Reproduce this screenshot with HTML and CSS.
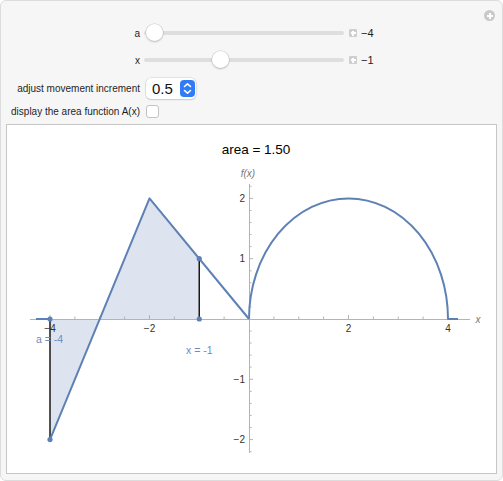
FILE: index.html
```html
<!DOCTYPE html>
<html>
<head>
<meta charset="utf-8">
<link rel="stylesheet" href="styles.css">
</head>
<body>
<div class="panel">
  <span class="corner-plus"></span>
  <div class="controls">
    <div class="row row-slider">
      <span class="label">a</span>
      <div class="slider"><span class="thumb thumb-a"></span></div>
      <span class="mini-plus"></span>
      <span class="value">−4</span>
    </div>
    <div class="row row-slider row-x">
      <span class="label">x</span>
      <div class="slider"><span class="thumb thumb-x"></span></div>
      <span class="mini-plus"></span>
      <span class="value">−1</span>
    </div>
    <div class="row row-popup">
      <span class="label">adjust movement increment</span>
      <div class="popup">
        <span class="popup-text">0.5</span>
        <span class="stepper">
          <svg width="15" height="17" viewBox="0 0 15 17"><path d="M4.5 6.5 L7.5 3.8 L10.5 6.5 M4.5 10.5 L7.5 13.2 L10.5 10.5" fill="none" stroke="#fff" stroke-width="1.6" stroke-linecap="round" stroke-linejoin="round"/></svg>
        </span>
      </div>
    </div>
    <div class="row row-check">
      <span class="label">display the area function A(x)</span>
      <span class="checkbox"></span>
    </div>
  </div>
  <div class="plot">
    <svg class="graph" width="489" height="348" viewBox="7 124 489 348">
      <text class="title" x="256" y="153" text-anchor="middle">area = 1.50</text>
      <polygon points="50,318 50,438.6 149.5,197.4 199.25,257.7 199.25,318" fill="#dee4ef"/>
      <g stroke="#b4b4b4" stroke-width="1" fill="none">
        <path d="M30 318.5 H470 M249.5 183 V452"/>
        <path d="M50 318 v-4 M149.5 318 v-4 M348.5 318 v-4 M448 318 v-4"/>
        <path d="M74.9 318 v-2.5 M99.75 318 v-2.5 M124.6 318 v-2.5 M174.4 318 v-2.5 M199.25 318 v-2.5 M224.1 318 v-2.5 M273.9 318 v-2.5 M298.75 318 v-2.5 M323.6 318 v-2.5 M373.4 318 v-2.5 M398.25 318 v-2.5 M423.1 318 v-2.5"/>
        <path d="M249 197.4 h4 M249 257.7 h4 M249 378.3 h4 M249 438.6 h4"/>
        <path d="M249 185.3 h2.5 M249 209.5 h2.5 M249 221.5 h2.5 M249 233.6 h2.5 M249 245.6 h2.5 M249 269.8 h2.5 M249 281.8 h2.5 M249 293.9 h2.5 M249 305.9 h2.5 M249 330.1 h2.5 M249 342.1 h2.5 M249 354.2 h2.5 M249 366.2 h2.5 M249 390.4 h2.5 M249 402.4 h2.5 M249 414.5 h2.5 M249 426.5 h2.5 M249 450.7 h2.5"/>
      </g>
      <g class="ticklabel">
        <text x="50" y="331" text-anchor="middle">−4</text>
        <text x="149.5" y="331" text-anchor="middle">−2</text>
        <text x="348.5" y="331" text-anchor="middle">2</text>
        <text x="448" y="331" text-anchor="middle">4</text>
        <text x="245" y="201" text-anchor="end">2</text>
        <text x="245" y="261" text-anchor="end">1</text>
        <text x="245" y="382" text-anchor="end">−1</text>
        <text x="245" y="442" text-anchor="end">−2</text>
      </g>
      <text class="axislabel" x="248" y="176" text-anchor="middle">f(x)</text>
      <text class="axislabel" x="478" y="322" text-anchor="middle">x</text>
      <g stroke="#1a1a1a" stroke-width="1.5">
        <path d="M50 318 V438.6 M199.25 318 V257.7"/>
      </g>
      <g stroke="#5e81b5" stroke-width="2" fill="none" stroke-linejoin="round">
        <path d="M36 318 H50 M50 438.6 L149.5 197.4 L249 318"/>
        <path d="M249 318 A99.5 120.6 0 0 1 448 318 H458"/>
      </g>
      <g fill="#5e81b5">
        <circle cx="50" cy="318" r="2.6"/>
        <circle cx="50" cy="438.6" r="2.6"/>
        <circle cx="199.25" cy="257.7" r="2.6"/>
        <circle cx="199.25" cy="318" r="2.6"/>
      </g>
      <text class="ptlabel" x="36" y="342">a = -4</text>
      <text class="ptlabel" x="186" y="353">x = -1</text>
    </svg>
  </div>
</div>
</body>
</html>
```

FILE: styles.css
```css
html, body {
  margin: 0;
  padding: 0;
  background: #ffffff;
}
body {
  font-family: "Liberation Sans", Arial, sans-serif;
  color: #222;
}
.panel {
  position: relative;
  width: 503px;
  height: 481px;
  box-sizing: border-box;
  background: #f6f6f6;
  border: 1px solid #dcdcdc;
  border-radius: 6px;
  padding: 0 5px 0 5px;
}
.corner-plus {
  position: absolute;
  right: 7px;
  top: 9px;
  width: 11px;
  height: 11px;
  border-radius: 50%;
  background: #c9c9c9;
}
.corner-plus::before, .corner-plus::after {
  content: "";
  position: absolute;
  background: #fff;
}
.corner-plus::before { left: 2.5px; top: 4.5px; width: 6px; height: 2px; }
.corner-plus::after { left: 4.5px; top: 2.5px; width: 2px; height: 6px; }
.controls {
  display: flex;
  flex-direction: column;
  padding-top: 22px;
}
.row {
  display: flex;
  align-items: center;
}
.label {
  width: 134px;
  display: flex;
  justify-content: flex-end;
  white-space: nowrap;
  font-size: 10px;
  color: #1e1e1e;
  flex: none;
}
.row-slider {
  height: 20px;
}
.row-x {
  margin-top: 7px;
}
.slider {
  position: relative;
  margin-left: 4px;
  width: 200px;
  height: 4px;
  border-radius: 2px;
  background: #dedede;
}
.thumb {
  position: absolute;
  top: -7px;
  width: 17px;
  height: 17px;
  border-radius: 50%;
  background: #fff;
  box-shadow: 0 0 0 0.5px #c4c4c4, 0 1px 2px rgba(0,0,0,0.25);
}
.thumb-a { left: 2px; }
.thumb-x { left: 68px; }
.mini-plus {
  position: relative;
  margin-left: 5px;
  width: 8px;
  height: 8px;
  border-radius: 1px;
  background: #cfcfcf;
}
.mini-plus::before, .mini-plus::after {
  content: "";
  position: absolute;
  background: #fff;
}
.mini-plus::before { left: 1.5px; top: 3px; width: 5px; height: 2px; }
.mini-plus::after { left: 3px; top: 1.5px; width: 2px; height: 5px; }
.value {
  margin-left: 4px;
  font-size: 11px;
  color: #222;
}
.row-popup {
  margin-top: 7px;
  height: 22px;
}
.popup {
  margin-left: 6px;
  width: 50px;
  height: 21px;
  box-sizing: border-box;
  background: #fff;
  border-radius: 5px;
  box-shadow: 0 0 0 0.5px #cfcfcf, 0 1px 1.5px rgba(0,0,0,0.18);
  display: flex;
  align-items: center;
  justify-content: space-between;
  padding: 0 1px 0 6px;
}
.popup-text {
  font-size: 15px;
  color: #111;
}
.stepper {
  width: 15px;
  height: 17px;
  border-radius: 4px;
  background: #2f7cf6;
  display: flex;
}
.row-check {
  margin-top: 5px;
  height: 14px;
}
.checkbox {
  margin-left: 6px;
  width: 13px;
  height: 13px;
  box-sizing: border-box;
  background: #fff;
  border: 1px solid #c4c4c4;
  border-radius: 3px;
}
.plot {
  margin-top: 6px;
  width: 491px;
  height: 350px;
  box-sizing: border-box;
  background: #fff;
  border: 1px solid #c6c6c6;
}
.graph {
  display: block;
}
.title {
  font-family: "Liberation Sans", Arial, sans-serif;
  font-size: 13.5px;
  fill: #000;
}
.ticklabel text {
  font-family: "Liberation Sans", Arial, sans-serif;
  font-size: 10px;
  fill: #333;
}
.axislabel {
  font-family: "Liberation Sans", Arial, sans-serif;
  font-size: 10px;
  font-style: italic;
  fill: #777;
}
.ptlabel {
  font-family: "Liberation Sans", Arial, sans-serif;
  font-size: 10.5px;
  fill: #6a8cc3;
}
```
